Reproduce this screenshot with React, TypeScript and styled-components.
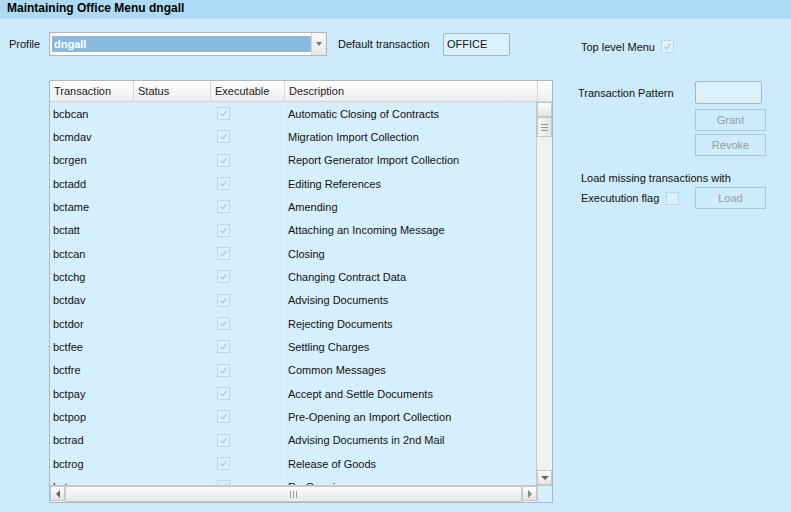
import styled, { createGlobalStyle } from "styled-components";

const GlobalStyle = createGlobalStyle`
  body {
    margin: 0;
    background: #cdebfc;
    font-family: "Liberation Sans", Arial, sans-serif;
    font-size: 11px;
    color: #111;
  }
`;

const Page = styled.div`
  width: 791px;
  height: 512px;
  overflow: hidden;
  background: #cdebfc;
`;

const TitleBar = styled.div`
  height: 19px;
  background: #addbf4;
  padding-left: 7px;
  font-size: 12px;
  font-weight: bold;
  line-height: 17px;
  color: #000;
`;

const Content = styled.div`
  padding-left: 9px;
`;

const TopRow = styled.div`
  display: flex;
  align-items: center;
  height: 24px;
  margin-top: 13px;
`;

const Label = styled.span<{ $w?: number }>`
  display: inline-block;
  width: ${p => (p.$w ? `${p.$w}px` : "auto")};
  white-space: nowrap;
`;

const Select = styled.div`
  width: 278px;
  height: 24px;
  box-sizing: border-box;
  border: 1px solid #b4b4b4;
  background: #fff;
  display: flex;
  padding: 3px 0 3px 2px;
`;

const SelectValue = styled.div`
  flex: 1;
  background: #87badc;
  color: #fff;
  font-weight: bold;
  line-height: 16px;
  padding-left: 2px;
`;

const SelectArrow = styled.div`
  width: 14px;
  margin-top: -3px;
  margin-bottom: -3px;
  border-left: 1px solid #d4d4d4;
  background: linear-gradient(#fafafa, #e6e6e6);
  display: flex;
  align-items: center;
  justify-content: center;
  &::after {
    content: "";
    border-left: 3px solid transparent;
    border-right: 3px solid transparent;
    border-top: 4px solid #777;
  }
`;

const TextInput = styled.div<{ $w: number }>`
  width: ${p => p.$w}px;
  height: 23px;
  box-sizing: border-box;
  border: 1px solid #a3b5c3;
  border-radius: 2px;
  background: #daf1fd;
  line-height: 21px;
  padding-left: 3px;
`;

const CheckBox = styled.span<{ $checked?: boolean }>`
  display: inline-flex;
  width: 13px;
  height: 13px;
  box-sizing: border-box;
  border: 1px solid #bcd7e6;
  background: #dcf1fc;
  align-items: center;
  justify-content: center;
  svg {
    display: ${p => (p.$checked ? "block" : "none")};
  }
`;

const Tick = () => (
  <svg width="9" height="9" viewBox="0 0 9 9">
    <path d="M1.5 4.5 L3.7 6.7 L7.5 2" fill="none" stroke="#b7c9d4" strokeWidth="1.3" />
  </svg>
);

const MainRow = styled.div`
  display: flex;
  margin-top: 24px;
`;

const Table = styled.div`
  margin-left: 40px;
  width: 504px;
  height: 423px;
  box-sizing: border-box;
  border: 1px solid #a8b8c4;
  background: #d6effd;
  display: flex;
  flex-direction: column;
`;

const HeadRow = styled.div`
  display: grid;
  grid-template-columns: 84px 77px 74px 253px 14px;
  height: 21px;
  box-sizing: border-box;
  background: linear-gradient(#ffffff, #eeeeee);
  border-bottom: 1px solid #d0d0d0;
  flex-shrink: 0;
`;

const HeadCell = styled.div`
  border-right: 1px solid #d6d6d6;
  padding-left: 4px;
  line-height: 20px;
  color: #222;
`;

const Body = styled.div`
  flex: 1;
  display: flex;
  overflow: hidden;
`;

const Rows = styled.div`
  width: 488px;
  overflow: hidden;
`;

const Row = styled.div`
  display: grid;
  grid-template-columns: 84px 77px 74px 253px;
  height: 23.33px;
`;

const Cell = styled.div<{ $check?: boolean }>`
  border-right: 1px solid #e6f5fd;
  padding-left: ${p => (p.$check ? "6px" : "3px")};
  display: flex;
  align-items: center;
  white-space: nowrap;
  overflow: hidden;
`;

const VScroll = styled.div`
  width: 15px;
  border-left: 1px solid #c6c6c6;
  background: #f0f0f0;
  display: flex;
  flex-direction: column;
`;

const ScrollBtn = styled.div<{ $dir: "up" | "down" | "left" | "right" }>`
  width: 15px;
  height: 15px;
  box-sizing: border-box;
  border: 1px solid #c8c8c8;
  background: linear-gradient(#fcfcfc, #e4e4e4);
  display: flex;
  align-items: center;
  justify-content: center;
  flex-shrink: 0;
  &::after {
    content: "";
    ${p =>
      p.$dir === "down"
        ? "border-left: 4px solid transparent; border-right: 4px solid transparent; border-top: 4px solid #666;"
        : p.$dir === "left"
        ? "border-top: 4px solid transparent; border-bottom: 4px solid transparent; border-right: 4px solid #666;"
        : p.$dir === "right"
        ? "border-top: 4px solid transparent; border-bottom: 4px solid transparent; border-left: 4px solid #888;"
        : ""}
  }
`;

const VThumb = styled.div`
  height: 20px;
  box-sizing: border-box;
  border: 1px solid #c4c4c4;
  background: linear-gradient(90deg, #f4f4f4, #e6e6e6);
  display: flex;
  flex-direction: column;
  align-items: center;
  justify-content: center;
  gap: 2px;
  span {
    width: 7px;
    height: 1px;
    background: #999;
  }
`;

const Track = styled.div`
  flex: 1;
`;

const HScroll = styled.div`
  height: 16px;
  border-top: 1px solid #c6c6c6;
  display: flex;
  flex-shrink: 0;
`;

const HBar = styled.div`
  width: 487px;
  background: #f0f0f0;
  display: flex;
`;

const HThumb = styled.div`
  flex: 1;
  box-sizing: border-box;
  border: 1px solid #c8c8c8;
  background: linear-gradient(#fafafa, #e8e8e8);
  display: flex;
  align-items: center;
  justify-content: center;
  gap: 2px;
  span {
    width: 1px;
    height: 7px;
    background: #999;
  }
`;

const Corner = styled.div`
  flex: 1;
  background: #d6effd;
  border-left: 1px solid #c6c6c6;
`;

const Side = styled.div`
  margin-left: 25px;
  padding-top: 1px;
  width: 190px;
`;

const SideRow = styled.div<{ $mt?: number; $indent?: number }>`
  display: flex;
  align-items: center;
  margin-top: ${p => p.$mt ?? 0}px;
  padding-left: ${p => p.$indent ?? 0}px;
`;

const Button = styled.div`
  width: 71px;
  height: 22px;
  box-sizing: border-box;
  border: 1px solid #aac6d8;
  background: #cfecfc;
  color: #9a9a9a;
  text-align: center;
  line-height: 20px;
`;

const rows: [string, string][] = [
  ["bcbcan", "Automatic Closing of Contracts"],
  ["bcmdav", "Migration Import Collection"],
  ["bcrgen", "Report Generator Import Collection"],
  ["bctadd", "Editing References"],
  ["bctame", "Amending"],
  ["bctatt", "Attaching an Incoming Message"],
  ["bctcan", "Closing"],
  ["bctchg", "Changing Contract Data"],
  ["bctdav", "Advising Documents"],
  ["bctdor", "Rejecting Documents"],
  ["bctfee", "Settling Charges"],
  ["bctfre", "Common Messages"],
  ["bctpay", "Accept and Settle Documents"],
  ["bctpop", "Pre-Opening an Import Collection"],
  ["bctrad", "Advising Documents in 2nd Mail"],
  ["bctrog", "Release of Goods"],
  ["bctrop", "Re-Opening"],
];

export default function App() {
  return (
    <Page>
      <GlobalStyle />
      <TitleBar>Maintaining Office Menu dngall</TitleBar>
      <Content>
        <TopRow>
          <Label $w={40}>Profile</Label>
          <Select>
            <SelectValue>dngall</SelectValue>
            <SelectArrow />
          </Select>
          <Label $w={105} style={{ marginLeft: 11 }}>Default transaction</Label>
          <TextInput $w={67}>OFFICE</TextInput>
          <Label style={{ marginLeft: 71, marginTop: 5 }}>Top level Menu</Label>
          <CheckBox $checked style={{ marginLeft: 6, marginTop: 4 }}>
            <Tick />
          </CheckBox>
        </TopRow>

        <MainRow>
          <Table>
            <HeadRow>
              <HeadCell>Transaction</HeadCell>
              <HeadCell>Status</HeadCell>
              <HeadCell>Executable</HeadCell>
              <HeadCell>Description</HeadCell>
              <HeadCell style={{ borderRight: "none" }} />
            </HeadRow>
            <Body>
              <Rows>
                {rows.map(([code, desc]) => (
                  <Row key={code}>
                    <Cell>{code}</Cell>
                    <Cell />
                    <Cell $check>
                      <CheckBox $checked>
                        <Tick />
                      </CheckBox>
                    </Cell>
                    <Cell>{desc}</Cell>
                  </Row>
                ))}
              </Rows>
              <VScroll>
                <ScrollBtn $dir="up" />
                <VThumb>
                  <span />
                  <span />
                  <span />
                </VThumb>
                <Track />
                <ScrollBtn $dir="down" />
              </VScroll>
            </Body>
            <HScroll>
              <HBar>
                <ScrollBtn $dir="left" />
                <HThumb>
                  <span />
                  <span />
                  <span />
                </HThumb>
                <ScrollBtn $dir="right" />
              </HBar>
              <Corner />
            </HScroll>
          </Table>

          <Side>
            <SideRow>
              <Label $w={117}>Transaction Pattern</Label>
              <TextInput $w={67} />
            </SideRow>
            <SideRow $mt={5} $indent={117}>
              <Button>Grant</Button>
            </SideRow>
            <SideRow $mt={3} $indent={117}>
              <Button>Revoke</Button>
            </SideRow>
            <SideRow $mt={16} $indent={3}>
              <Label>Load missing transactions with</Label>
            </SideRow>
            <SideRow $mt={3} $indent={3}>
              <Label $w={85}>Executution flag</Label>
              <CheckBox />
              <Button style={{ marginLeft: 16 }}>Load</Button>
            </SideRow>
          </Side>
        </MainRow>
      </Content>
    </Page>
  );
}
